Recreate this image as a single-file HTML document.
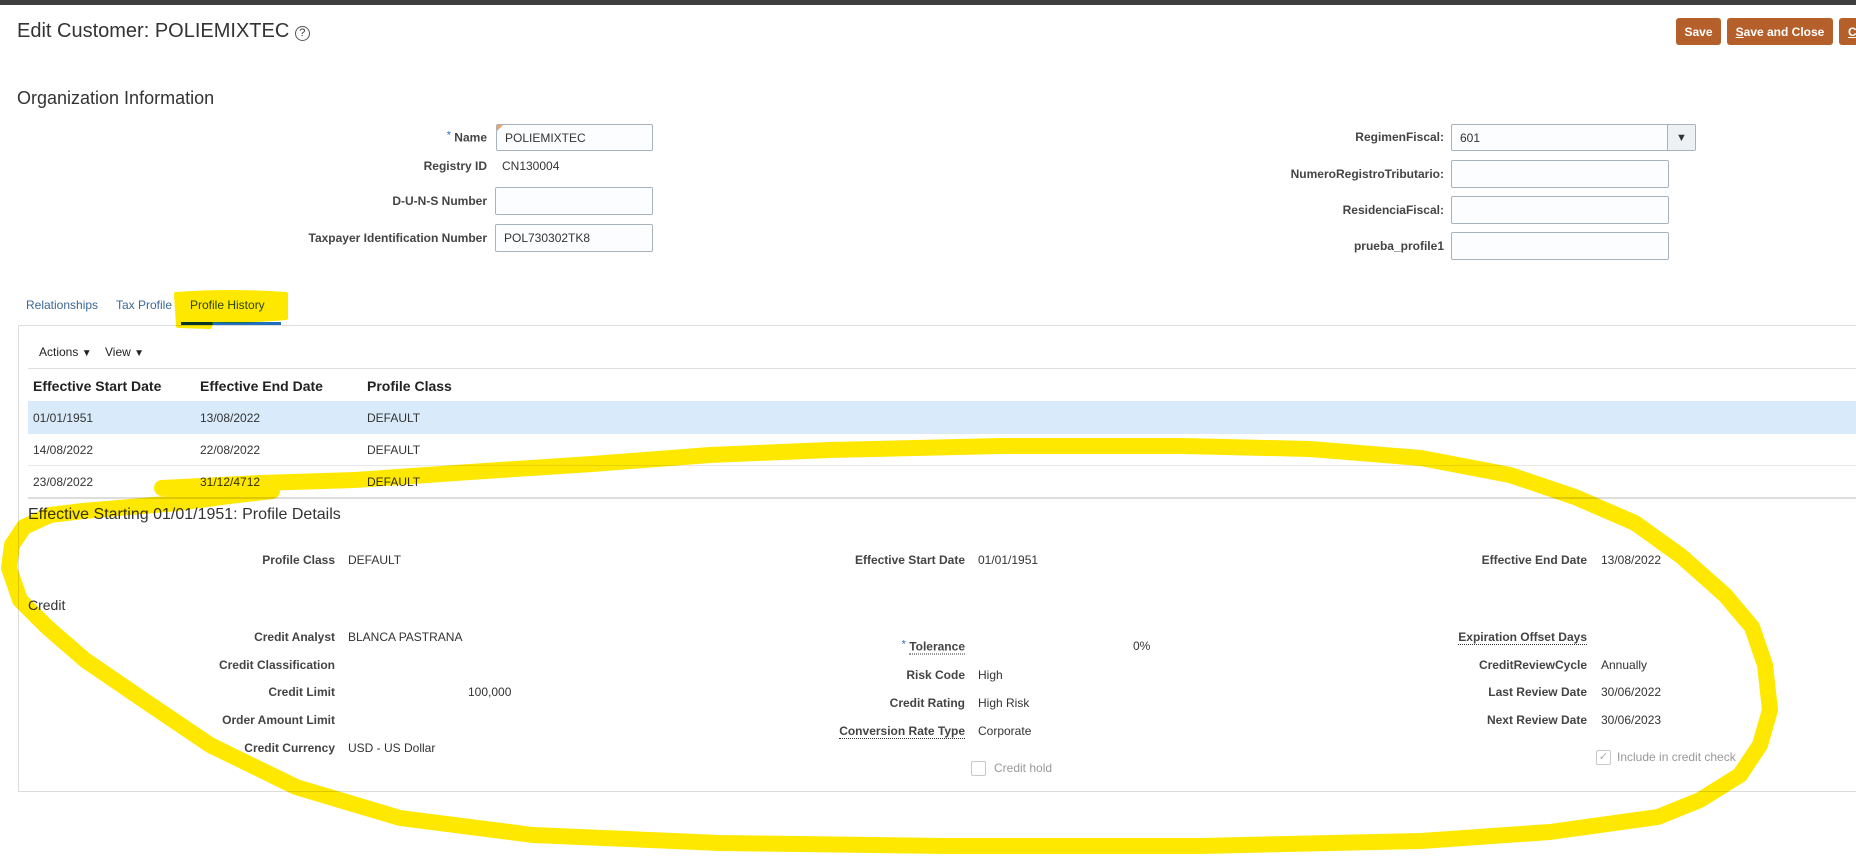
<!DOCTYPE html>
<html><head><meta charset="utf-8"><style>
*{margin:0;padding:0;box-sizing:border-box}
body{width:1856px;height:857px;overflow:hidden;background:#fff;font-family:"Liberation Sans",Arial,sans-serif;color:#333;position:relative}
.a{position:absolute;white-space:nowrap}
.l{position:absolute;white-space:nowrap;font-size:12px;font-weight:bold;color:#444;text-align:right;transform:translateY(-50%)}
.v{position:absolute;white-space:nowrap;font-size:12px;color:#333;transform:translateY(-50%)}
.in{position:absolute;border:1px solid #a8b3bd;border-radius:2px;background:#fbfdfe;font-size:12px;padding:0 8px;display:flex;align-items:center}
.btn{position:absolute;top:18px;height:27px;background:#b5602a;border-radius:3px;color:#fff;font-weight:bold;font-size:12px;display:flex;align-items:center;justify-content:center}
.dot{border-bottom:1px dotted #333}
.cell{position:absolute;font-size:12px;transform:translateY(-50%);white-space:nowrap}
.hd{font-size:14px;font-weight:bold;color:#222}
.hl{mix-blend-mode:multiply}
</style></head><body>
<div class="a" style="left:0;top:0;width:1856px;height:5px;background:#3f3f3f"></div>
<div class="a" style="left:17px;top:20px;font-size:20px;color:#333">Edit Customer: POLIEMIXTEC <span style="display:inline-block;width:15px;height:15px;border:1.2px solid #555;border-radius:50%;font-size:11px;text-align:center;line-height:13px;vertical-align:1px">?</span></div>
<div class="btn" style="left:1676px;width:45px">Save</div>
<div class="btn" style="left:1727px;width:106px"><u>S</u>ave and Close</div>
<div class="btn" style="left:1839px;width:40px;justify-content:flex-start;padding-left:9px"><u>C</u></div>

<div class="a" style="left:17px;top:88px;font-size:18px;color:#333">Organization Information</div>

<div class="l" style="right:1369px;top:137px"><span style="color:#2a6ebb;font-weight:normal;vertical-align:3px;font-size:11px">*</span> Name</div>
<div class="in" style="left:496px;top:124px;width:157px;height:27px">POLIEMIXTEC<span style="position:absolute;left:0;top:0;border-top:6px solid #f0a060;border-right:6px solid transparent"></span></div>
<div class="l" style="right:1369px;top:166px">Registry ID</div>
<div class="v" style="left:502px;top:166px">CN130004</div>
<div class="l" style="right:1369px;top:201px">D-U-N-S Number</div>
<div class="in" style="left:495px;top:187px;width:158px;height:28px"></div>
<div class="l" style="right:1369px;top:238px">Taxpayer Identification Number</div>
<div class="in" style="left:495px;top:224px;width:158px;height:28px">POL730302TK8</div>

<div class="l" style="right:412px;top:137px">RegimenFiscal:</div>
<div class="in" style="left:1451px;top:124px;width:245px;height:27px">601<span style="position:absolute;right:0;top:0;width:28px;height:25px;border-left:1px solid #a8b3bd;background:#eef1f4;font-size:11px;display:flex;align-items:center;justify-content:center">▼</span></div>
<div class="l" style="right:412px;top:174px">NumeroRegistroTributario:</div>
<div class="in" style="left:1451px;top:160px;width:218px;height:28px"></div>
<div class="l" style="right:412px;top:210px">ResidenciaFiscal:</div>
<div class="in" style="left:1451px;top:196px;width:218px;height:28px"></div>
<div class="l" style="right:412px;top:246px">prueba_profile1</div>
<div class="in" style="left:1451px;top:232px;width:218px;height:28px"></div>

<div class="a" style="left:26px;top:298px;font-size:12px;color:#3c6894">Relationships</div>
<div class="a" style="left:116px;top:298px;font-size:12px;color:#3c6894">Tax Profile</div>
<div class="a" style="left:190px;top:298px;font-size:12px;color:#2c4a10">Profile History</div>
<div class="a" style="left:181px;top:322px;width:100px;height:3px;background:#1f6fbf"></div>

<div class="a" style="left:18px;top:325px;width:1850px;height:467px;border:1px solid #dcdcdc"></div>
<div class="a" style="left:39px;top:345px;font-size:12px;color:#222">Actions <span style="font-size:10px">▼</span></div>
<div class="a" style="left:105px;top:345px;font-size:12px;color:#222">View <span style="font-size:10px">▼</span></div>
<div class="a" style="left:28px;top:368px;width:1840px;height:1px;background:#ddd"></div>
<div class="cell hd" style="left:33px;top:386px">Effective Start Date</div>
<div class="cell hd" style="left:200px;top:386px">Effective End Date</div>
<div class="cell hd" style="left:367px;top:386px">Profile Class</div>
<div class="a" style="left:28px;top:401px;width:1840px;height:33px;background:#d9ebfa"></div>
<div class="cell" style="left:33px;top:418px">01/01/1951</div><div class="cell" style="left:200px;top:418px">13/08/2022</div><div class="cell" style="left:367px;top:418px">DEFAULT</div>
<div class="cell" style="left:33px;top:450px">14/08/2022</div><div class="cell" style="left:200px;top:450px">22/08/2022</div><div class="cell" style="left:367px;top:450px">DEFAULT</div>
<div class="a" style="left:28px;top:465px;width:1840px;height:1px;background:#e8e8e8"></div>
<div class="cell" style="left:33px;top:482px">23/08/2022</div><div class="cell" style="left:200px;top:482px">31/12/4712</div><div class="cell" style="left:367px;top:482px">DEFAULT</div>
<div class="a" style="left:28px;top:497px;width:1840px;height:2px;background:#ddd"></div>

<div class="a" style="left:28px;top:506px;font-size:16px;color:#333">Effective Starting 01/01/1951: Profile Details</div>
<div class="l" style="right:1521px;top:560px">Profile Class</div><div class="v" style="left:348px;top:560px">DEFAULT</div>
<div class="l" style="right:891px;top:560px">Effective Start Date</div><div class="v" style="left:978px;top:560px">01/01/1951</div>
<div class="l" style="right:269px;top:560px">Effective End Date</div><div class="v" style="left:1601px;top:560px">13/08/2022</div>

<div class="a" style="left:28px;top:597px;font-size:14px;color:#333">Credit</div>
<div class="l" style="right:1521px;top:637px">Credit Analyst</div><div class="v" style="left:348px;top:637px">BLANCA PASTRANA</div>
<div class="l" style="right:1521px;top:665px">Credit Classification</div>
<div class="l" style="right:1521px;top:692px">Credit Limit</div><div class="v" style="left:468px;top:692px">100,000</div>
<div class="l" style="right:1521px;top:720px">Order Amount Limit</div>
<div class="l" style="right:1521px;top:748px">Credit Currency</div><div class="v" style="left:348px;top:748px">USD - US Dollar</div>

<div class="l" style="right:891px;top:646px"><span style="color:#2a6ebb;font-weight:normal;vertical-align:3px;font-size:11px">*</span> <span class="dot">Tolerance</span></div><div class="v" style="left:1133px;top:646px">0%</div>
<div class="l" style="right:891px;top:675px">Risk Code</div><div class="v" style="left:978px;top:675px">High</div>
<div class="l" style="right:891px;top:703px">Credit Rating</div><div class="v" style="left:978px;top:703px">High Risk</div>
<div class="l" style="right:891px;top:731px"><span class="dot">Conversion Rate Type</span></div><div class="v" style="left:978px;top:731px">Corporate</div>
<div class="a" style="left:971px;top:761px;width:15px;height:15px;border:1px solid #c8c8c8;border-radius:2px"></div>
<div class="v" style="left:994px;top:768px;color:#999">Credit hold</div>

<div class="l" style="right:269px;top:637px"><span class="dot">Expiration Offset Days</span></div>
<div class="l" style="right:269px;top:665px">CreditReviewCycle</div><div class="v" style="left:1601px;top:665px">Annually</div>
<div class="l" style="right:269px;top:692px">Last Review Date</div><div class="v" style="left:1601px;top:692px">30/06/2022</div>
<div class="l" style="right:269px;top:720px">Next Review Date</div><div class="v" style="left:1601px;top:720px">30/06/2023</div>
<div class="a" style="left:1596px;top:750px;width:15px;height:15px;border:1px solid #c8c8c8;border-radius:2px;font-size:11px;color:#aaa;text-align:center;line-height:13px">✓</div>
<div class="v" style="left:1617px;top:757px;color:#999">Include in credit check</div>

<svg class="a hl" style="left:0;top:0" width="1856" height="857" viewBox="0 0 1856 857">
<path d="M176 294 Q230 290 286 294 L286 318 Q240 322 212 320 L210 327 L178 326 Z" fill="#ffe800" stroke="#ffe800" stroke-width="4" stroke-linejoin="round"/>
<rect x="181" y="322" width="31" height="3" fill="#2d7a2d"/>
<polyline fill="none" stroke="#ffe800" stroke-width="16" stroke-linejoin="round" stroke-linecap="round"
points="162,488 260,483 355,480 470,472 592,464 710,455 829,450 1000,446 1184,446 1310,449 1421,458 1510,475 1575,497 1635,523 1681,556 1725,595 1752,627 1765,665 1770,710 1760,745 1740,775 1700,800 1658,817 1550,832 1421,841 1200,846 947,846 720,843 533,835 400,818 296,787 210,745 142,699 85,660 47,627 20,600 9,568 12,545 24,527 50,515 83,511 130,507 178,503 230,496 272,491"/>
</svg>
</body></html>
